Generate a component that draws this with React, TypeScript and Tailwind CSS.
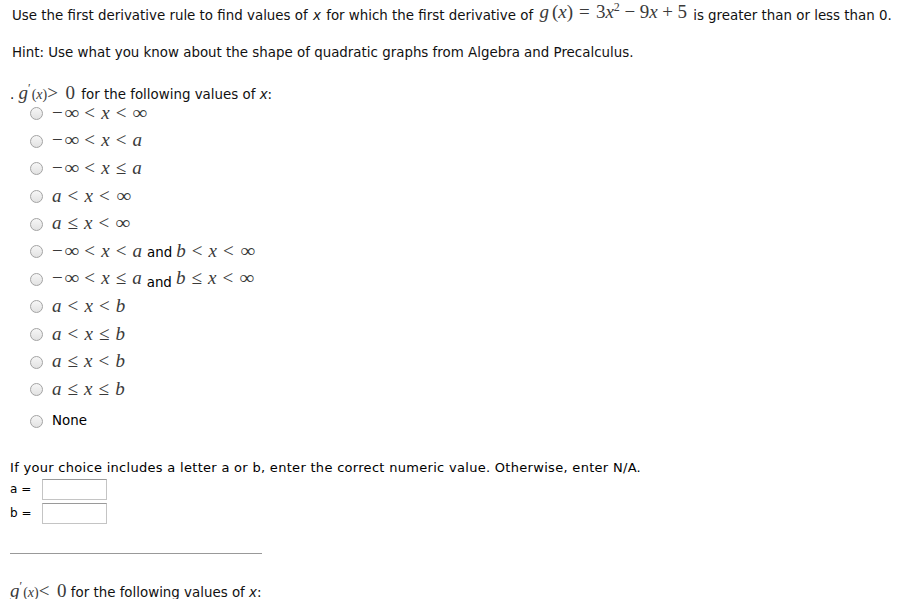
import React from "react";

const sans = "font-['Verdana','DejaVu_Sans',sans-serif]";
const tahoma = "font-['Tahoma','DejaVu_Sans',sans-serif]";

function M({ children, className = "" }: { children: React.ReactNode; className?: string }) {
  return (
    <span className={`font-['Liberation_Serif','DejaVu_Serif',serif] text-[19px] text-[#3a3a3a] ${className}`}>
      {children}
    </span>
  );
}

function V({ children }: { children: React.ReactNode }) {
  return <i>{children}</i>;
}

// relation sign with thick spacing, as MathJax lays it out
function R({ children }: { children: React.ReactNode }) {
  return <span className="mx-[0.32em]">{children}</span>;
}

// binary operator with medium spacing
function B({ children }: { children: React.ReactNode }) {
  return <span className="mx-[0.24em]">{children}</span>;
}

// minus infinity, a touch wider like Computer Modern
const NegInf = () => (
  <>
    <span className="mr-[2px]">−</span>
    <span className="inline-block scale-x-110">∞</span>
  </>
);
const Inf = () => <span className="inline-block scale-x-110 ml-[1px]">∞</span>;

function Radio() {
  return (
    <span className="inline-block w-[13px] h-[13px] rounded-full border border-[#a3a3a3] bg-gradient-to-b from-[#f6f6f6] to-[#e2e2e2] shrink-0" />
  );
}

const And = ({ low = false }: { low?: boolean }) => (
  <span className={`text-[13.4px] text-black ml-[5px] mr-[4px] relative ${low ? "top-[3px]" : ""}`}>and</span>
);

const options: React.ReactNode[] = [
  <M><NegInf /><R>&lt;</R><V>x</V><R>&lt;</R><Inf /></M>,
  <M><NegInf /><R>&lt;</R><V>x</V><R>&lt;</R><V>a</V></M>,
  <M><NegInf /><R>&lt;</R><V>x</V><R>≤</R><V>a</V></M>,
  <M><V>a</V><R>&lt;</R><V>x</V><R>&lt;</R><Inf /></M>,
  <M><V>a</V><R>≤</R><V>x</V><R>&lt;</R><Inf /></M>,
  <>
    <M><NegInf /><R>&lt;</R><V>x</V><R>&lt;</R><V>a</V></M>
    <And />
    <M><V>b</V><R>&lt;</R><V>x</V><R>&lt;</R><Inf /></M>
  </>,
  <>
    <M><NegInf /><R>&lt;</R><V>x</V><R>≤</R><V>a</V></M>
    <And low />
    <M><V>b</V><R>≤</R><V>x</V><R>&lt;</R><Inf /></M>
  </>,
  <M><V>a</V><R>&lt;</R><V>x</V><R>&lt;</R><V>b</V></M>,
  <M><V>a</V><R>&lt;</R><V>x</V><R>≤</R><V>b</V></M>,
  <M><V>a</V><R>≤</R><V>x</V><R>&lt;</R><V>b</V></M>,
  <M><V>a</V><R>≤</R><V>x</V><R>≤</R><V>b</V></M>,
];

function GPrime({ rel }: { rel: string }) {
  return (
    <M>
      <V>g</V>
      <span className="text-[12px] relative -top-[7px]">′</span>
      <span className="text-[14px] ml-[1px]">(<V>x</V>)</span>
      {rel}
      <span className="ml-[0.4em]">0</span>
    </M>
  );
}

export default function App() {
  return (
    <div className={`w-[900px] h-[599px] overflow-hidden bg-white text-[13.4px] text-[#111] ${sans}`}>
      <p className="pl-[12px] pt-[4px] leading-[20px] h-[24px] whitespace-nowrap">
        Use the first derivative rule to find values of <i className="mx-[1px]">x</i> for which the first derivative of{" "}
        <M className="text-[19px] relative -top-[2px] ml-[2px]">
          <V>g</V>
          <span className="ml-[3px]">(</span>
          <V>x</V>)<R>=</R>3<V>x</V>
          <span className="text-[12px] relative -top-[7px]">2</span>
          <B>−</B>9<V>x</V>
          <B>+</B>5
        </M>{" "}
        <span className="ml-[2px]">is greater than or less than 0.</span>
      </p>

      <p className="pl-[12px] mt-[21px] leading-[16px] whitespace-nowrap">
        Hint: Use what you know about the shape of quadratic graphs from Algebra and Precalculus.
      </p>

      <div className="pl-[10px] mt-[22px] leading-[20px] whitespace-nowrap">
        . <GPrime rel=">" /> <span className="ml-[2px]">for the following values of <i>x</i>:</span>
      </div>

      <ul className="pl-[30px]">
        {options.map((o, i) => (
          <li key={i} className={`flex items-center gap-[9px] h-[27.6px] ${i === 0 ? "-mt-[5px]" : ""}`}>
            <Radio />
            <span className="whitespace-nowrap leading-[20px]">{o}</span>
          </li>
        ))}
        <li className="flex items-center gap-[9px] h-[27px] mt-[4px]">
          <Radio />
          <span className="text-[13.4px] text-black">None</span>
        </li>
      </ul>

      <div className={`${tahoma} pl-[10px] mt-[25px] text-[13px] tracking-[0.3px] text-black`}>
        <p className="leading-[16px] whitespace-nowrap">
          If your choice includes a letter a or b, enter the correct numeric value. Otherwise, enter N/A.
        </p>
        <div className="flex items-center h-[21px] mt-[3px]">
          <span className="w-[32px] text-[12px] tracking-normal">a =</span>
          <input className="w-[65px] h-[21px] border border-[#c4c4c4] border-t-[#9a9a9a] bg-white" />
        </div>
        <div className="flex items-center h-[21px] mt-[3px]">
          <span className="w-[32px] text-[12px] tracking-normal">b =</span>
          <input className="w-[65px] h-[21px] border border-[#c4c4c4] border-t-[#9a9a9a] bg-white" />
        </div>
        <div className="w-[252px] h-px bg-[#999] mt-[29px]" />
      </div>

      <div className="pl-[10px] mt-[27px] leading-[20px] whitespace-nowrap">
        <GPrime rel="<" /> for the following values of <i>x</i>:
      </div>
    </div>
  );
}
